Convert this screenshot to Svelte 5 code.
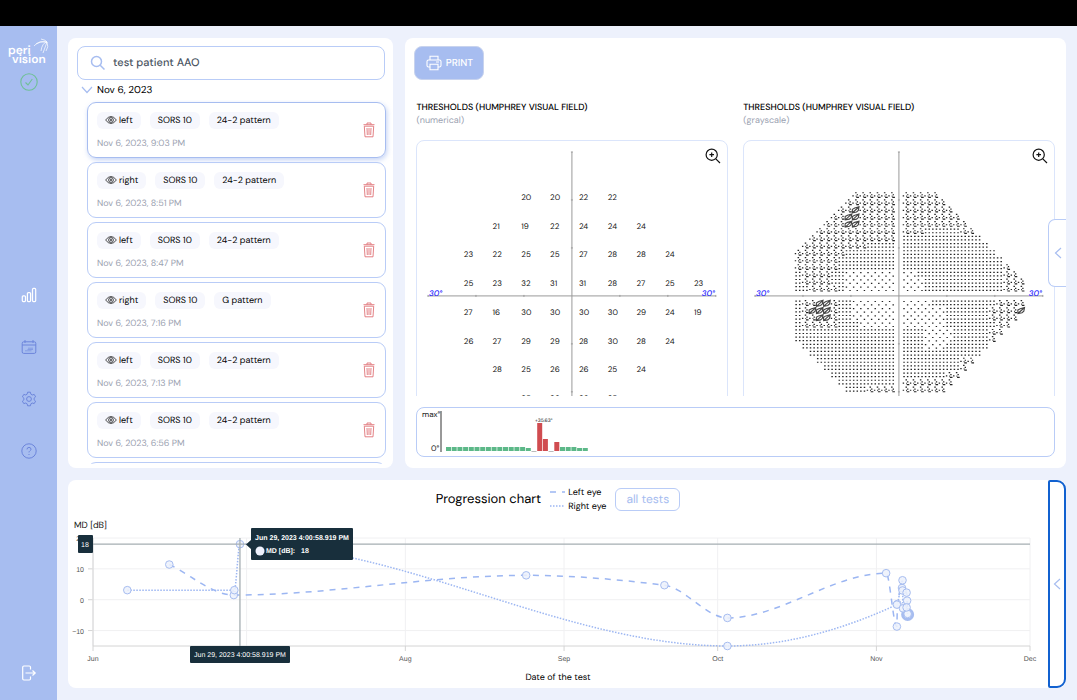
<script lang="ts">
    type Point = [day: number, value: number];

    let query = $state("test patient AAO");
    let selected = $state(0);

    const tests = [
        { eye: "left", algorithm: "SORS 10", pattern: "24-2 pattern", time: "Nov 6, 2023, 9:03 PM" },
        { eye: "right", algorithm: "SORS 10", pattern: "24-2 pattern", time: "Nov 6, 2023, 8:51 PM" },
        { eye: "left", algorithm: "SORS 10", pattern: "24-2 pattern", time: "Nov 6, 2023, 8:47 PM" },
        { eye: "right", algorithm: "SORS 10", pattern: "G pattern", time: "Nov 6, 2023, 7:16 PM" },
        { eye: "left", algorithm: "SORS 10", pattern: "24-2 pattern", time: "Nov 6, 2023, 7:13 PM" },
        { eye: "left", algorithm: "SORS 10", pattern: "24-2 pattern", time: "Nov 6, 2023, 6:56 PM" },
        { eye: "right", algorithm: "SORS 10", pattern: "24-2 pattern", time: "Nov 6, 2023, 6:49 PM" },
    ];

    // one row per 6 degrees, start is the column offset from the vertical axis
    const thresholds = [
        { start: -2, values: [20, 20, 22, 22] },
        { start: -3, values: [21, 19, 22, 24, 24, 24] },
        { start: -4, values: [23, 22, 25, 25, 27, 28, 28, 24] },
        { start: -4, values: [25, 23, 32, 31, 31, 28, 27, 25, 23] },
        { start: -4, values: [27, 16, 30, 30, 30, 30, 29, 24, 19] },
        { start: -4, values: [26, 27, 29, 29, 28, 30, 28, 24] },
        { start: -3, values: [28, 25, 26, 26, 25, 24] },
        { start: -2, values: [25, 26, 26, 25] },
    ];

    // left | right half of every row: a = light grain, b = grid, c = sparse, d = dark
    const grayscale = [
        "aaaaaa|aaaaa",
        "aaaaaaa|aaaaaa",
        "aadaaaaa|aaaaaaa",
        "aaddaaaaa|aaaaaaaa",
        "aaaddaaaaa|aaaaaaaaa",
        "aaaaaaaaaaa|aaabbbbbaa",
        "aaaaaaaaaaaa|bbbbbbbbbbb",
        "aaaaaaaaabbbb|bbbbbbbbbbbb",
        "aaaaaaabbbbbbb|bbbbbbbbbbbbb",
        "aaaaaabbbbbbbb|bbbbbbbbbbbbbb",
        "aaaaaabbbbbbbb|bbbbbbbbbbbbbba",
        "baaaabbccccccc|ccbbbbbbbbbbbbaa",
        "baaaabbccccccc|cccbbbbbbbbbbbaaa",
        "bbaaaabccccccc|cccbbbbbbbbbbbaaa",
        "baaddabbcccccc|ccccbbbbbbbbbaaaa",
        "badddabbcccccc|ccccccbbbbbbaaaad",
        "baaddabbcccccc|ccccccbbbbbbaaaa",
        "baaaaabbbccccc|ccccccbbbbbbbaa",
        "bbbbbbbbbbbbbb|bbbccccbbbbbaa",
        "bbbbbbbbbbbbbb|bbbccccbbbbba",
        "bbbbbbbbbbbbb|bbbcccbbbbbb",
        "bbbbbbbbbbbb|bbbbbbbbbbb",
        "bbbbbbbbbbb|bbbbbbbbaa",
        "bbbbbbbbbb|bbbbbbbba",
        "bbbbbbbbb|bbbbbbaa",
        "bbbbbbbb|aaaaaaa",
        "bbbaaaa|aaaaaa",
    ];
    const CELL = 7.2;

    const cells = grayscale.flatMap((row, i) => {
        const [left, right] = row.split("|");
        const y = (i < 14 ? i - 14 : i - 13) * CELL - CELL / 2;
        return [
            ...[...left].map((kind, k) => ({ kind, y, x: (k - left.length) * CELL - CELL / 2 })),
            ...[...right].map((kind, k) => ({ kind, y, x: (k + 1) * CELL - CELL / 2 })),
        ];
    });

    const gaze = [4, 4, 4, 4, 4, 4, 4, 4, 4, 4, 4, 4, 4, 4, 3, 0, 28, 12, 0, 9, 4, 4, 4, 3, 3];

    // progression chart, x in days since Jun 1
    const LEFT = 25;
    const RIGHT = 962;
    const TOP = 20;
    const BOTTOM = 128;
    const x = (day: number) => LEFT + (day / 183) * (RIGHT - LEFT);
    const y = (value: number) => TOP + ((20 - value) / 35) * (BOTTOM - TOP);

    const months = [
        { label: "Jun", day: 0 },
        { label: "", day: 30 },
        { label: "Aug", day: 61 },
        { label: "Sep", day: 92 },
        { label: "Oct", day: 122 },
        { label: "Nov", day: 153 },
        { label: "Dec", day: 183 },
    ];
    const levels = [20, 10, 0, -10];

    const leftEye: Point[] = [
        [14.9, 11.4], [27.5, 1.5], [84.6, 7.9], [111.6, 4.7], [123.9, -5.9], [154.9, 8.6],
        [157, -8.7], [157.1, -1.4], [158, 3.8], [158.1, 3], [158.9, 2.3], [159, -0.3], [159.1, -4.6],
    ];
    const rightEye: Point[] = [
        [6.7, 3.1], [27.6, 3.1], [28.7, 18], [123.9, -15], [157, -1.6], [158.1, 6.3], [158.2, -2.8], [158.9, -2.5],
    ];

    // monotone cubic through the points
    function curve(points: Point[]) {
        const p = points.map(([d, v]) => [x(d), y(v)]);
        const slope = (i: number) => (p[i + 1][1] - p[i][1]) / (p[i + 1][0] - p[i][0]);
        const tangent = p.map((_, i) => {
            if (i === 0) return slope(0);
            if (i === p.length - 1) return slope(i - 1);
            const a = slope(i - 1);
            const b = slope(i);
            return a * b <= 0 ? 0 : (2 * a * b) / (a + b);
        });
        let d = `M${p[0][0]},${p[0][1]}`;
        for (let i = 1; i < p.length; i++) {
            const h = (p[i][0] - p[i - 1][0]) / 3;
            d += `C${p[i - 1][0] + h},${p[i - 1][1] + h * tangent[i - 1]} ${p[i][0] - h},${p[i][1] - h * tangent[i]} ${p[i][0]},${p[i][1]}`;
        }
        return d;
    }
</script>

{#snippet fieldAxes()}
    <path
        class="axis"
        d="M-144 0H144M0 -144V144M-144 -1V1M-96 -1V1M-48 -1V1M48 -1V1M96 -1V1M144 -1V1M-1 -144H1M-1 -96H1M-1 -48H1M-1 48H1M-1 96H1"
    />
    <text class="degree" x="-143" y="0">30°</text>
    <text class="degree" x="130" y="0">30°</text>
{/snippet}

{#snippet zoomButton()}
    <button class="zoom" aria-label="Zoom in">
        <svg width="16" height="16" viewBox="0 0 16 16">
            <circle cx="6.7" cy="6.7" r="5.6" />
            <path d="M10.8 10.8 15 15M6.7 4.4V9M4.4 6.7H9" />
        </svg>
    </button>
{/snippet}

<div class="app">
    <div class="titlebar"></div>
    <div class="body">
        <nav class="sidebar">
            <a class="logo" href="#home" aria-label="peri vision">
                <svg width="42" height="28" viewBox="0 0 42 28">
                    <text x="0" y="16">peri</text>
                    <text x="4" y="25">vision</text>
                    <path d="M26 8Q31 2 39 4M33 1Q38 2 39 4Q41 9 38 13M39 4Q34 5 33 13M39 4Q32 3 28 6M39 4L35 15" />
                </svg>
            </a>
            <svg class="status" width="18" height="18" viewBox="0 0 18 18">
                <circle cx="9" cy="9" r="8.2" />
                <path d="M5.5 9.5 8 12 12.3 6" />
            </svg>
            <div class="links">
                <a class="active" href="#results" aria-label="Results">
                    <svg width="16" height="16" viewBox="0 0 16 16">
                        <rect x="1.3" y="8.8" width="3.2" height="5.8" rx="1" />
                        <rect x="6.4" y="5.6" width="3.2" height="9" rx="1" />
                        <rect x="11.5" y="1.4" width="3.2" height="13.2" rx="1" />
                    </svg>
                </a>
                <a href="#calendar" aria-label="Calendar">
                    <svg width="16" height="16" viewBox="0 0 16 16">
                        <rect x="1.2" y="2.8" width="13.6" height="11.6" rx="1.5" />
                        <path d="M1.2 6H14.8M4 1V4M12 1V4" />
                        <path class="faint" d="M7 9.2H12M4 11.8H10.5M6.5 10.5H12" />
                    </svg>
                </a>
                <a href="#settings" aria-label="Settings">
                    <svg width="16" height="16" viewBox="0 0 16 16">
                        <circle cx="8" cy="8" r="2.4" />
                        <path d="M6.6 1.2H9.4L9.9 3.2L11.2 4L13.2 3.4L14.6 5.8L13.1 7.2V8.8L14.6 10.2L13.2 12.6L11.2 12L9.9 12.8L9.4 14.8H6.6L6.1 12.8L4.8 12L2.8 12.6L1.4 10.2L2.9 8.8V7.2L1.4 5.8L2.8 3.4L4.8 4L6.1 3.2Z" />
                    </svg>
                </a>
                <a href="#help" aria-label="Help">
                    <svg width="16" height="16" viewBox="0 0 16 16">
                        <circle cx="8" cy="8" r="7.2" />
                        <path d="M6 6.4Q6 4.4 8 4.4T10 6.3C10 7.6 8 7.8 8 9.4M8 11V12" />
                    </svg>
                </a>
            </div>
            <a class="logout" href="#logout" aria-label="Log out">
                <svg width="16" height="16" viewBox="0 0 16 16">
                    <path d="M9.5 4.5V2.2Q9.5 1 8.3 1H2.9Q1.7 1 1.7 2.2V13.8Q1.7 15 2.9 15H8.3Q9.5 15 9.5 13.8V11.5M4.5 8H14M11.5 5.5 14.2 8 11.5 10.5" />
                </svg>
            </a>
        </nav>

        <main>
            <section class="card patients">
                <label class="search">
                    <svg width="16" height="16" viewBox="0 0 16 16">
                        <circle cx="6.5" cy="6.5" r="5" />
                        <path d="M10.2 10.2 14.5 14.5" />
                    </svg>
                    <input type="text" aria-label="Search patient" bind:value={query} />
                </label>
                <button class="group">
                    <svg width="12" height="8" viewBox="0 0 12 8"><path d="M1 1 6 6.5 11 1" /></svg>
                    Nov 6, 2023
                </button>
                <ul class="tests">
                    {#each tests as test, i}
                        <li class="test" class:selected={selected === i}>
                            <button class="info" onclick={() => (selected = i)}>
                                <span class="tags">
                                    <span class="tag">
                                        <svg width="12" height="8" viewBox="0 0 12 8">
                                            <path d="M.6 4Q6 -3 11.4 4Q6 11 .6 4Z" />
                                            <circle cx="6" cy="4" r="2.4" />
                                            <circle cx="6" cy="4" r=".8" />
                                        </svg>
                                        {test.eye}
                                    </span>
                                    <span class="tag">{test.algorithm}</span>
                                    <span class="tag">{test.pattern}</span>
                                </span>
                                <span class="time">{test.time}</span>
                            </button>
                            <button class="delete" aria-label="Delete test">
                                <svg width="12" height="16" viewBox="0 0 12 16">
                                    <path d="M.5 2.7H11.5M4 2.5V1H8V2.5M1.3 4.2H10.7L10 14.8H2ZM4 6 4.3 13M6 6V13M8 6 7.7 13" />
                                </svg>
                            </button>
                        </li>
                    {/each}
                </ul>
            </section>

            <section class="card results">
                <button class="print">
                    <svg width="16" height="16" viewBox="0 0 16 16">
                        <path d="M4 5V1.2H12V5M4 12H2.6Q1 12 1 10.4V6.6Q1 5 2.6 5H13.4Q15 5 15 6.6V10.4Q15 12 13.4 12H12M4 9.2H12V14.8H4ZM10 7H13" />
                    </svg>
                    PRINT
                </button>
                <div class="fields">
                    <figure>
                        <figcaption>
                            THRESHOLDS (HUMPHREY VISUAL FIELD)
                            <small>(numerical)</small>
                        </figcaption>
                        <div class="field">
                            {@render zoomButton()}
                            <svg viewBox="-155 -155 310 310">
                                {@render fieldAxes()}
                                {#each thresholds as row, r}
                                    {#each row.values as value, c}
                                        <text class="value" x={(row.start + c) * 28.8 + 7} y={(r - 4) * 28.8 + 19}>{value}</text>
                                    {/each}
                                {/each}
                            </svg>
                        </div>
                    </figure>
                    <figure>
                        <figcaption>
                            THRESHOLDS (HUMPHREY VISUAL FIELD)
                            <small>(grayscale)</small>
                        </figcaption>
                        <div class="field">
                            {@render zoomButton()}
                            <svg viewBox="-155 -155 310 310">
                                <defs>
                                    <path id="cell-a" d="M.2 4.4h1.4M3 1.2h1.5M4.6 3.2h1.3M4.2 5.9h2.6M3.6 4.6h.8" />
                                    <path id="cell-b" d="M.8 1.6h1.5M4.4 1.6h1.5M.8 5.2h1.5M4.4 5.2h1.5" />
                                    <path id="cell-c" d="M.8 2h1.4M4.4 5.4h1.4" />
                                    <path id="cell-d" d="M.2 3.4 2.6 2 6.9 .8 6.2 4.4 4.4 6 .3 6.8ZM.3 6.8 6.9 .8" />
                                </defs>
                                {@render fieldAxes()}
                                <g class="grain">
                                    {#each cells as cell}
                                        <use class:dark={cell.kind === "d"} href="#cell-{cell.kind}" x={cell.x} y={cell.y} />
                                    {/each}
                                </g>
                            </svg>
                        </div>
                    </figure>
                </div>
                <div class="gaze">
                    <svg width="180" height="48" viewBox="0 0 180 48">
                        <text x="5" y="9">max°</text>
                        <text x="14" y="43">0°</text>
                        <path class="gaze-axis" d="M24 3V44" />
                        {#each gaze as height, i}
                            {#if height === 0}
                                <rect class="blink" x={29 + i * 5.7} y="43" width="5" height="1" />
                            {:else}
                                <rect class:off={height > 5} x={29 + i * 5.7} y={43 - height} width="5" {height} />
                            {/if}
                        {/each}
                        <text class="peak" x="118" y="14">+35.63°</text>
                    </svg>
                </div>
                <button class="drawer" aria-label="Open details">
                    <svg width="8" height="12" viewBox="0 0 8 12"><path d="M7 1 1.5 6 7 11" /></svg>
                </button>
            </section>

            <section class="card progression">
                <div class="chart">
                    <header>
                        <h2>Progression chart</h2>
                        <ul class="legend">
                            <li>
                                <svg width="15" height="2"><path class="dashed" d="M0 1H15" /></svg>
                                Left eye
                            </li>
                            <li>
                                <svg width="15" height="2"><path class="dotted" d="M0 1H15" /></svg>
                                Right eye
                            </li>
                        </ul>
                        <button class="all">all tests</button>
                    </header>
                    <svg class="plot" viewBox="0 0 980 152">
                        <text class="unit" x="6" y="10">MD [dB]</text>
                        {#each levels as level}
                            <path class="split" d="M{LEFT} {y(level)}H{RIGHT}" />
                            <path class="tick" d="M{LEFT - 5} {y(level)}H{LEFT}" />
                            <text class="label" text-anchor="end" x={LEFT - 9} y={y(level) + 3}>{level < 0 ? `−${-level}` : level}</text>
                        {/each}
                        {#each months as month}
                            <path class="split" d="M{x(month.day)} {TOP}V{BOTTOM}" />
                            <path class="tick" d="M{x(month.day)} {BOTTOM}v5" />
                            {#if month.label}
                                <text class="label" text-anchor="middle" x={x(month.day)} y="143">{month.label}</text>
                            {/if}
                        {/each}
                        <path class="base" d="M{LEFT} {TOP}V{BOTTOM}H{RIGHT}" />

                        <path class="dashed" d={curve(leftEye)} />
                        <path class="dotted" d={curve(rightEye)} />
                        <circle class="current" cx={x(159.1)} cy={y(-4.8)} r="5" />
                        {#each [...leftEye, ...rightEye] as [day, value]}
                            <circle class="point" cx={x(day)} cy={y(value)} r="3.8" />
                        {/each}

                        <path class="pointer" d="M{LEFT} {y(18)}H{RIGHT}M{x(28.7)} {TOP}V{BOTTOM}" />
                        <rect class="tip" x="10" y="17" width="15" height="18" rx="1" />
                        <text class="tip-text" x="13" y="29">18</text>
                        <rect class="tip" x="122" y="128" width="100" height="17" rx="1" />
                        <text class="tip-text" text-anchor="middle" x="172" y="139">Jun 29, 2023 4:00:58.919 PM</text>
                        <path class="tip" d="M178 26.5 183 22V11Q183 10 184 10H284Q285 10 285 11V41Q285 42 284 42H184Q183 42 183 41V31Z" />
                        <text class="tip-text bold" text-anchor="middle" x="234" y="22">Jun 29, 2023 4:00:58.919 PM</text>
                        <circle class="marker" cx="192" cy="33" r="4.5" />
                        <text class="tip-text bold" x="198" y="35">MD [dB]:</text>
                        <text class="tip-text bold" x="233" y="35">18</text>
                    </svg>
                    <p class="caption">Date of the test</p>
                </div>
                <button class="collapse" aria-label="Expand chart">
                    <svg width="8" height="12" viewBox="0 0 8 12"><path d="M7 1 1.5 6 7 11" /></svg>
                </button>
            </section>
        </main>
    </div>
</div>

<style>
    :global(body) {
        margin: 0;
    }
    .app {
        --blue: #a7bdf0;
        --line: #b9ccf7;
        --gray: #9aa1b0;
        display: flex;
        flex-direction: column;
        height: 100vh;
        min-height: 640px;
        font-family: "DM Sans", Inter, "Open Sans", sans-serif;
        font-size: 9px;
        text-rendering: geometricPrecision;
        color: #000;
        background: #edf1fc;
    }
    .app * {
        box-sizing: border-box;
    }
    svg {
        display: block;
        flex: none;
        fill: none;
    }
    button {
        padding: 0;
        border: 0;
        background: none;
        font: inherit;
        color: inherit;
        text-rendering: inherit;
        cursor: pointer;
    }
    ul {
        margin: 0;
        padding: 0;
        list-style: none;
    }
    .titlebar {
        flex: none;
        height: 26px;
        background: #000;
    }
    .body {
        display: flex;
        flex: 1;
        min-height: 0;
    }

    .sidebar {
        display: flex;
        flex: none;
        flex-direction: column;
        align-items: center;
        width: 57px;
        padding: 12px 0 19px;
        background: var(--blue);
    }
    .logo text {
        fill: #fff;
        font-size: 12px;
        font-weight: 600;
    }
    .logo path {
        stroke: #fff;
        stroke-width: 0.7;
    }
    .status {
        margin-top: 7px;
        stroke: #6fc096;
        stroke-width: 1.1;
    }
    .links {
        display: flex;
        flex-direction: column;
        gap: 36px;
        margin: auto 0;
        padding-bottom: 10px;
    }
    .links a {
        stroke: #6c85db;
    }
    .links a.active,
    .logout {
        stroke: #fff;
        stroke-width: 1.2;
    }
    .faint {
        opacity: 0.6;
    }

    main {
        display: grid;
        flex: 1;
        grid-template-columns: minmax(0, 33fr) minmax(0, 67fr);
        grid-template-rows: minmax(0, 1fr) auto;
        gap: 12px;
        min-width: 0;
        padding: 12px 11px;
    }
    .card {
        border-radius: 8px;
        background: #fff;
    }

    .patients {
        display: flex;
        flex-direction: column;
        padding: 8px 0 4px 9px;
    }
    .search {
        display: flex;
        flex: none;
        align-items: center;
        gap: 7px;
        height: 34px;
        margin-right: 8px;
        padding: 0 12px;
        border: 1px solid var(--line);
        border-radius: 8px;
    }
    .search svg {
        stroke: var(--blue);
        stroke-width: 1.5;
    }
    .search input {
        flex: 1;
        min-width: 0;
        padding: 0;
        border: 0;
        outline: 0;
        background: none;
        font: inherit;
        font-size: 11px;
        font-weight: 500;
        text-rendering: inherit;
        color: #4b5563;
    }
    .group {
        display: flex;
        flex: none;
        align-items: center;
        gap: 4px;
        height: 20px;
        padding-left: 4px;
        font-size: 10px;
    }
    .group svg,
    .drawer svg,
    .collapse svg {
        stroke: var(--blue);
        stroke-width: 1.2;
    }
    .tests {
        display: flex;
        flex: 1;
        flex-direction: column;
        gap: 4px;
        min-height: 0;
        padding: 2px 7px 0 10px;
        overflow: hidden;
    }
    .test {
        display: flex;
        flex: none;
        align-items: center;
        height: 56px;
        padding: 0 10px 0 9px;
        border: 1px solid var(--line);
        border-radius: 9px;
    }
    .test.selected {
        border-color: var(--blue);
        box-shadow: 1px 2px 5px #a7bdf0aa;
    }
    .info {
        display: flex;
        flex: 1;
        flex-direction: column;
        gap: 8px;
        text-align: left;
    }
    .tags {
        display: flex;
        gap: 9px;
    }
    .tag {
        display: flex;
        align-items: center;
        gap: 2px;
        height: 17px;
        padding: 0 8px;
        border-radius: 6px;
        background: #f6f7fd;
    }
    .tag svg {
        stroke: #222;
        stroke-width: 0.8;
    }
    .time {
        color: var(--gray);
    }
    .delete svg {
        stroke: #e07377;
        stroke-width: 0.9;
    }

    .results {
        position: relative;
        display: flex;
        flex-direction: column;
        padding: 8px 11px 11px;
    }
    .print {
        display: flex;
        flex: none;
        align-items: center;
        justify-content: center;
        align-self: flex-start;
        gap: 4px;
        width: 70px;
        height: 34px;
        margin-left: -2px;
        border: 1px solid #c8d3ee;
        border-radius: 8px;
        background: var(--blue);
        font-size: 10px;
        font-weight: 500;
        color: #fff;
    }
    .print svg {
        stroke: #fff;
        stroke-width: 1.1;
    }
    .fields {
        display: flex;
        flex: 1;
        gap: 15px;
        min-height: 0;
        padding-top: 20px;
        overflow: hidden;
    }
    figure {
        flex: 1;
        margin: 0;
    }
    figcaption {
        height: 40px;
        font-weight: 500;
        line-height: 14px;
        white-space: nowrap;
    }
    figcaption small {
        display: block;
        font-size: 9px;
        font-weight: 400;
        line-height: 12px;
        color: var(--gray);
    }
    .field {
        position: relative;
        border: 1px solid #dbe5fb;
        border-radius: 8px;
    }
    .zoom {
        position: absolute;
        top: 7px;
        right: 6px;
    }
    .zoom svg {
        stroke: #111;
        stroke-width: 1.2;
    }
    .axis {
        stroke: #999;
    }
    .degree {
        fill: #1a1aff;
        font-size: 8px;
        font-style: italic;
        font-weight: 500;
    }
    .value {
        fill: #111;
        font-size: 8px;
    }
    .grain {
        stroke: #222;
        stroke-width: 1.2;
    }
    .grain .dark {
        stroke: #444;
        stroke-width: 1.1;
    }
    .gaze {
        flex: none;
        height: 50px;
        margin-top: 11px;
        border: 1px solid var(--line);
        border-radius: 8px;
    }
    .gaze text {
        fill: #111;
        font-size: 8px;
    }
    .gaze text.peak {
        font-size: 5px;
    }
    .gaze-axis {
        stroke: #333;
    }
    .gaze rect {
        fill: #5cb888;
    }
    .gaze rect.off {
        fill: #d04c50;
    }
    .gaze rect.blink {
        fill: #bbb;
    }
    .drawer {
        position: absolute;
        top: 181px;
        right: 0;
        display: grid;
        place-items: center;
        width: 18px;
        height: 68px;
        border: 1px solid var(--line);
        border-right: 0;
        border-radius: 7px 0 0 7px;
        background: #fff;
    }

    .progression {
        display: flex;
        grid-column: 1 / -1;
    }
    .chart {
        flex: 1;
        min-width: 0;
        padding-bottom: 4px;
    }
    header {
        display: flex;
        align-items: center;
        justify-content: center;
        gap: 9px;
        height: 38px;
    }
    h2 {
        margin: 0;
        font-size: 13px;
        font-weight: 400;
    }
    .legend li {
        display: flex;
        align-items: center;
        gap: 3px;
        line-height: 14px;
    }
    .dashed,
    .dotted {
        stroke: #9cb6f2;
        stroke-width: 1.5;
    }
    .dashed {
        stroke-dasharray: 6 6;
    }
    .dotted {
        stroke-dasharray: 1.5 1.5;
    }
    .all {
        height: 23px;
        padding: 0 10px;
        border: 1px solid var(--line);
        border-radius: 6px;
        font-size: 12px;
        color: var(--blue);
    }
    .plot {
        width: 100%;
    }
    .unit {
        fill: #111;
        font-size: 9px;
    }
    .label {
        fill: #555;
        font-size: 7px;
    }
    .label,
    .tip-text {
        font-family: "Liberation Sans", Arial, sans-serif;
    }
    .split {
        stroke: #f0f0f2;
    }
    .tick,
    .base {
        stroke: #d4d4d4;
    }
    .point {
        fill: #edf1fcdd;
        stroke: var(--blue);
    }
    .current {
        stroke: var(--blue);
        stroke-width: 3;
    }
    .pointer {
        stroke: #a5aeb2;
        stroke-width: 1.3;
    }
    .tip {
        fill: #182f3c;
    }
    .tip-text {
        fill: #fff;
        font-size: 7px;
    }
    .bold {
        font-weight: 700;
    }
    .marker {
        fill: #edf1fc;
    }
    .caption {
        margin: 0;
        line-height: 14px;
        text-align: center;
    }
    .collapse {
        display: grid;
        flex: none;
        place-items: center;
        width: 18px;
        border: 2px solid #1161d0;
        border-radius: 2px 9px 9px 2px;
    }
</style>
